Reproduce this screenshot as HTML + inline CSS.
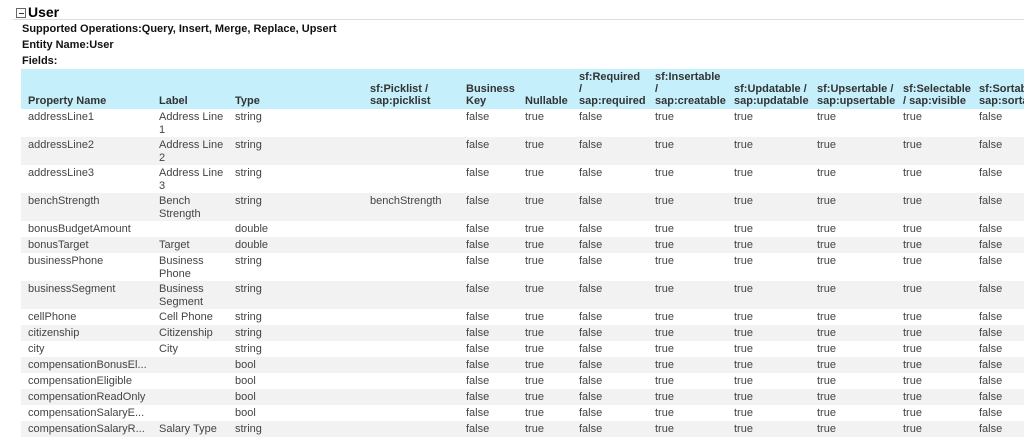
<!DOCTYPE html>
<html><head><style>
body{margin:0;background:#fff;font-family:"Liberation Sans",Arial,sans-serif;width:1024px;height:442px;overflow:hidden;position:relative}
.box{position:absolute;left:16px;top:8px;width:8px;height:8px;border:1px solid #666;background:#fff}
.box:after{content:"";position:absolute;left:2px;top:4px;width:5px;height:1px;background:#333}
.title{position:absolute;left:28px;top:4px;font-weight:bold;font-size:14px;color:#000}
.hr{position:absolute;left:13px;right:0;top:19px;height:1px;background:#ddd}
.lbl{position:absolute;left:22px;font-weight:bold;font-size:11px;color:#111}
table{position:absolute;left:21px;top:69px;border-collapse:collapse;table-layout:fixed;font-size:11px;color:#444;width:1040px}
th{background:#c4effb;font-weight:bold;color:#333;text-align:left;vertical-align:bottom;height:38px;padding:0 0 2px 7px;line-height:12px}
td{vertical-align:top;padding:2px 0 0 7px;line-height:13px;height:14px;white-space:nowrap;overflow:hidden}
td.w{white-space:normal}
tr.d td{height:26px}
tr.g td{background:#f2f2f2}
</style></head><body>
<div class="box"></div><div class="title">User</div><div class="hr"></div>
<div class="lbl" style="top:23px">Supported Operations:Query, Insert, Merge, Replace, Upsert</div>
<div class="lbl" style="top:39px">Entity Name:User</div>
<div class="lbl" style="top:55px">Fields:</div>
<table>
<colgroup><col style="width:131px"><col style="width:76px"><col style="width:135px"><col style="width:96px"><col style="width:59px"><col style="width:54px"><col style="width:76px"><col style="width:79px"><col style="width:83px"><col style="width:86px"><col style="width:76px"><col style="width:89px"></colgroup>
<tr><th>Property Name</th><th>Label</th><th>Type</th><th>sf:Picklist /<br>sap:picklist</th><th>Business<br>Key</th><th>Nullable</th><th>sf:Required<br>/<br>sap:required</th><th>sf:Insertable<br>/<br>sap:creatable</th><th>sf:Updatable /<br>sap:updatable</th><th>sf:Upsertable /<br>sap:upsertable</th><th>sf:Selectable<br>/ sap:visible</th><th>sf:Sortable /<br>sap:sortable</th></tr>
<tr class="d"><td>addressLine1</td><td class="w">Address Line 1</td><td>string</td><td></td><td>false</td><td>true</td><td>false</td><td>true</td><td>true</td><td>true</td><td>true</td><td>false</td></tr>
<tr class="d g"><td>addressLine2</td><td class="w">Address Line 2</td><td>string</td><td></td><td>false</td><td>true</td><td>false</td><td>true</td><td>true</td><td>true</td><td>true</td><td>false</td></tr>
<tr class="d"><td>addressLine3</td><td class="w">Address Line 3</td><td>string</td><td></td><td>false</td><td>true</td><td>false</td><td>true</td><td>true</td><td>true</td><td>true</td><td>false</td></tr>
<tr class="d g"><td>benchStrength</td><td class="w">Bench Strength</td><td>string</td><td>benchStrength</td><td>false</td><td>true</td><td>false</td><td>true</td><td>true</td><td>true</td><td>true</td><td>false</td></tr>
<tr><td>bonusBudgetAmount</td><td></td><td>double</td><td></td><td>false</td><td>true</td><td>false</td><td>true</td><td>true</td><td>true</td><td>true</td><td>false</td></tr>
<tr class="g"><td>bonusTarget</td><td>Target</td><td>double</td><td></td><td>false</td><td>true</td><td>false</td><td>true</td><td>true</td><td>true</td><td>true</td><td>false</td></tr>
<tr class="d"><td>businessPhone</td><td class="w">Business Phone</td><td>string</td><td></td><td>false</td><td>true</td><td>false</td><td>true</td><td>true</td><td>true</td><td>true</td><td>false</td></tr>
<tr class="d g"><td>businessSegment</td><td class="w">Business Segment</td><td>string</td><td></td><td>false</td><td>true</td><td>false</td><td>true</td><td>true</td><td>true</td><td>true</td><td>false</td></tr>
<tr><td>cellPhone</td><td>Cell Phone</td><td>string</td><td></td><td>false</td><td>true</td><td>false</td><td>true</td><td>true</td><td>true</td><td>true</td><td>false</td></tr>
<tr class="g"><td>citizenship</td><td>Citizenship</td><td>string</td><td></td><td>false</td><td>true</td><td>false</td><td>true</td><td>true</td><td>true</td><td>true</td><td>false</td></tr>
<tr><td>city</td><td>City</td><td>string</td><td></td><td>false</td><td>true</td><td>false</td><td>true</td><td>true</td><td>true</td><td>true</td><td>false</td></tr>
<tr class="g"><td>compensationBonusEl...</td><td></td><td>bool</td><td></td><td>false</td><td>true</td><td>false</td><td>true</td><td>true</td><td>true</td><td>true</td><td>false</td></tr>
<tr><td>compensationEligible</td><td></td><td>bool</td><td></td><td>false</td><td>true</td><td>false</td><td>true</td><td>true</td><td>true</td><td>true</td><td>false</td></tr>
<tr class="g"><td>compensationReadOnly</td><td></td><td>bool</td><td></td><td>false</td><td>true</td><td>false</td><td>true</td><td>true</td><td>true</td><td>true</td><td>false</td></tr>
<tr><td>compensationSalaryE...</td><td></td><td>bool</td><td></td><td>false</td><td>true</td><td>false</td><td>true</td><td>true</td><td>true</td><td>true</td><td>false</td></tr>
<tr class="g"><td>compensationSalaryR...</td><td>Salary Type</td><td>string</td><td></td><td>false</td><td>true</td><td>false</td><td>true</td><td>true</td><td>true</td><td>true</td><td>false</td></tr>
</table>
</body></html>
